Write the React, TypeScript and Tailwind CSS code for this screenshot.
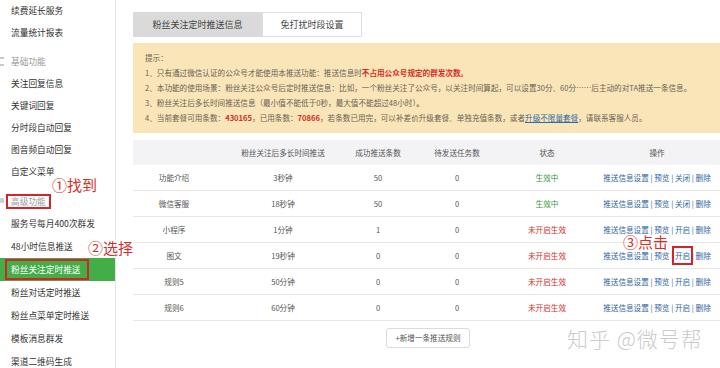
import React from 'react'

const font = { fontFamily: '"Noto Sans CJK SC", "Noto Sans", sans-serif' }

const topItems = ['续费延长服务', '流量统计报表']
const basicItems = ['关注回复信息', '关键词回复', '分时段自动回复', '图音频自动回复', '自定义菜单']
const advItems = [
  '服务号每月400次群发',
  '48小时信息推送',
  '粉丝关注定时推送',
  '粉丝对话定时推送',
  '粉丝点菜单定时推送',
  '模板消息群发',
  '渠道二维码生成'
]

interface Rule {
  name: string
  delay: string
  sent: string
  on: boolean
}

const rules: Rule[] = [
  { name: '功能介绍', delay: '3秒钟', sent: '50', on: true },
  { name: '微信客服', delay: '18秒钟', sent: '50', on: true },
  { name: '小程序', delay: '1分钟', sent: '1', on: false },
  { name: '图文', delay: '19秒钟', sent: '0', on: false },
  { name: '规则5', delay: '50分钟', sent: '0', on: false },
  { name: '规则6', delay: '60分钟', sent: '0', on: false }
]

const cols = 'grid grid-cols-[82px_136px_54px_104px_76px_144px]'

const Sidebar: React.FC = () => (
  <div className="w-[116px] shrink-0 border-r border-[#e4e4e4] text-[8.7px] text-[#333]">
    {topItems.map((t) => (
      <div key={t} className="h-[22px] flex items-center pl-[11px]">{t}</div>
    ))}
    <div className="mt-[7px] h-[22px] flex items-center pl-[11px] text-[#9a9a9a] relative">
      <span className="absolute left-0 top-[6px] w-[4px] h-[9px] border-y-2 border-[#c9c9c9]" />
      基础功能
    </div>
    {basicItems.map((t) => (
      <div key={t} className="h-[22px] flex items-center pl-[11px]">{t}</div>
    ))}
    <div className="mt-[7px] h-[22px] flex items-center pl-[6px] relative">
      <span className="absolute left-0 top-[8px] w-[4px] h-[5px] bg-[#cfcfcf] rounded-[1px]" />
      <span className="border-2 border-[#d4242a] px-[3px] leading-[11px] text-[#9a9a9a]">高级功能</span>
    </div>
    {advItems.map((t) =>
      t === '粉丝关注定时推送' ? (
        <div key={t} className="h-[23px] flex items-center pl-[5px] bg-[#43ad48] text-white">
          <span className="border-2 border-[#d4242a] pl-[4px] pr-[6px] h-[21px] flex items-center">{t}</span>
        </div>
      ) : (
        <div key={t} className="h-[23px] flex items-center pl-[11px]">{t}</div>
      )
    )}
  </div>
)

const Notice: React.FC = () => (
  <div className="mt-[6px] bg-[#fae5b8] pl-[12px] pt-[7px] pb-[8px] text-[7.6px] leading-[15px] text-[#6b6256] whitespace-nowrap">
    <div>提示：</div>
    <div>
      1、只有通过微信认证的公众号才能使用本推送功能：推送信息时
      <span className="text-[#d1302a] font-bold">不占用公众号规定的群发次数。</span>
    </div>
    <div>
      2、本功能的使用场景：粉丝关注公众号后定时推送信息：比如，一个粉丝关注了公众号，以关注时间算起，可以设置30分、60分……后主动的对TA推送一条信息。
    </div>
    <div>
      3、粉丝关注后多长时间推送信息（最小值不能低于0秒，最大值不能超过48小时）<span className="font-bold">。</span>
    </div>
    <div>
      4、当前套餐可用条数：<span className="text-[#d1302a] font-bold">430165</span>，已用条数：
      <span className="text-[#d1302a] font-bold">70866</span>，若条数已用完，可以补差价升级套餐、单独充值条数，或者
      <span className="text-[#2f6aa6] underline">升级不限量套餐</span>，请联系客服人员。
    </div>
  </div>
)

const Ops: React.FC<{ on: boolean; boxed?: boolean }> = ({ on, boxed }) => (
  <span className="text-[#30669e] whitespace-nowrap">
    推送信息设置 | 预览 |{' '}
    <span className="relative">
      {on ? '关闭' : '开启'}
      {boxed && <span className="absolute -left-[3px] -right-[3px] -top-[4px] -bottom-[4px] border-2 border-[#d4242a]" />}
    </span>{' '}
    | 删除
  </span>
)

const RuleTable: React.FC = () => (
  <div className="mt-[7px] text-[7.6px] text-[#555]">
    <div className={`${cols} h-[25px] items-center text-center bg-[#f3f3f6]`}>
      <div />
      <div>粉丝关注后多长时间推送</div>
      <div>成功推送条数</div>
      <div>待发送任务数</div>
      <div>状态</div>
      <div>操作</div>
    </div>
    {rules.map((r) => (
      <div key={r.name} className={`${cols} h-[26px] items-center text-center border-b border-[#e8e8e8]`}>
        <div>{r.name}</div>
        <div>{r.delay}</div>
        <div>{r.sent}</div>
        <div>0</div>
        <div className={r.on ? 'text-[#3a9a3e]' : 'text-[#d5302e]'}>{r.on ? '生效中' : '未开启生效'}</div>
        <div>
          <Ops on={r.on} boxed={r.name === '图文'} />
        </div>
      </div>
    ))}
    <div className="w-[596px] flex justify-center mt-[7px]">
      <button className="h-[20px] px-[9px] border border-[#dcdcdc] rounded-[3px] bg-white text-[7.6px] text-[#555] -translate-x-[3px]">
        +新增一条推送规则
      </button>
    </div>
  </div>
)

export default function App() {
  return (
    <div className="w-[720px] h-[368px] relative overflow-hidden bg-white flex" style={font}>
      <Sidebar />
      <div className="flex-1 min-w-0 pl-[17px] pt-[12px] overflow-hidden">
        <div className="flex text-[9px] text-[#444]">
          <div className="w-[129px] h-[25px] bg-[#dadada] flex items-center justify-center">粉丝关注定时推送信息</div>
          <div className="w-[100px] h-[25px] border border-[#dedede] flex items-center justify-center">免打扰时段设置</div>
        </div>
        <Notice />
        <RuleTable />
      </div>

      <div className="absolute left-[52px] top-[175px] text-[15px] leading-[20px] text-[#d4302b]">①找到</div>
      <div className="absolute left-[88px] top-[238px] text-[15px] leading-[20px] text-[#d4302b]">②选择</div>
      <div className="absolute left-[623px] top-[235px] text-[15px] leading-[14px] text-[#d4302b]">③点击</div>
      <div className="absolute left-[567px] top-[326px] text-[21px] leading-[24px] text-[#cbcbcb] font-light tracking-[1px]">
        知乎 @微号帮
      </div>
    </div>
  )
}
